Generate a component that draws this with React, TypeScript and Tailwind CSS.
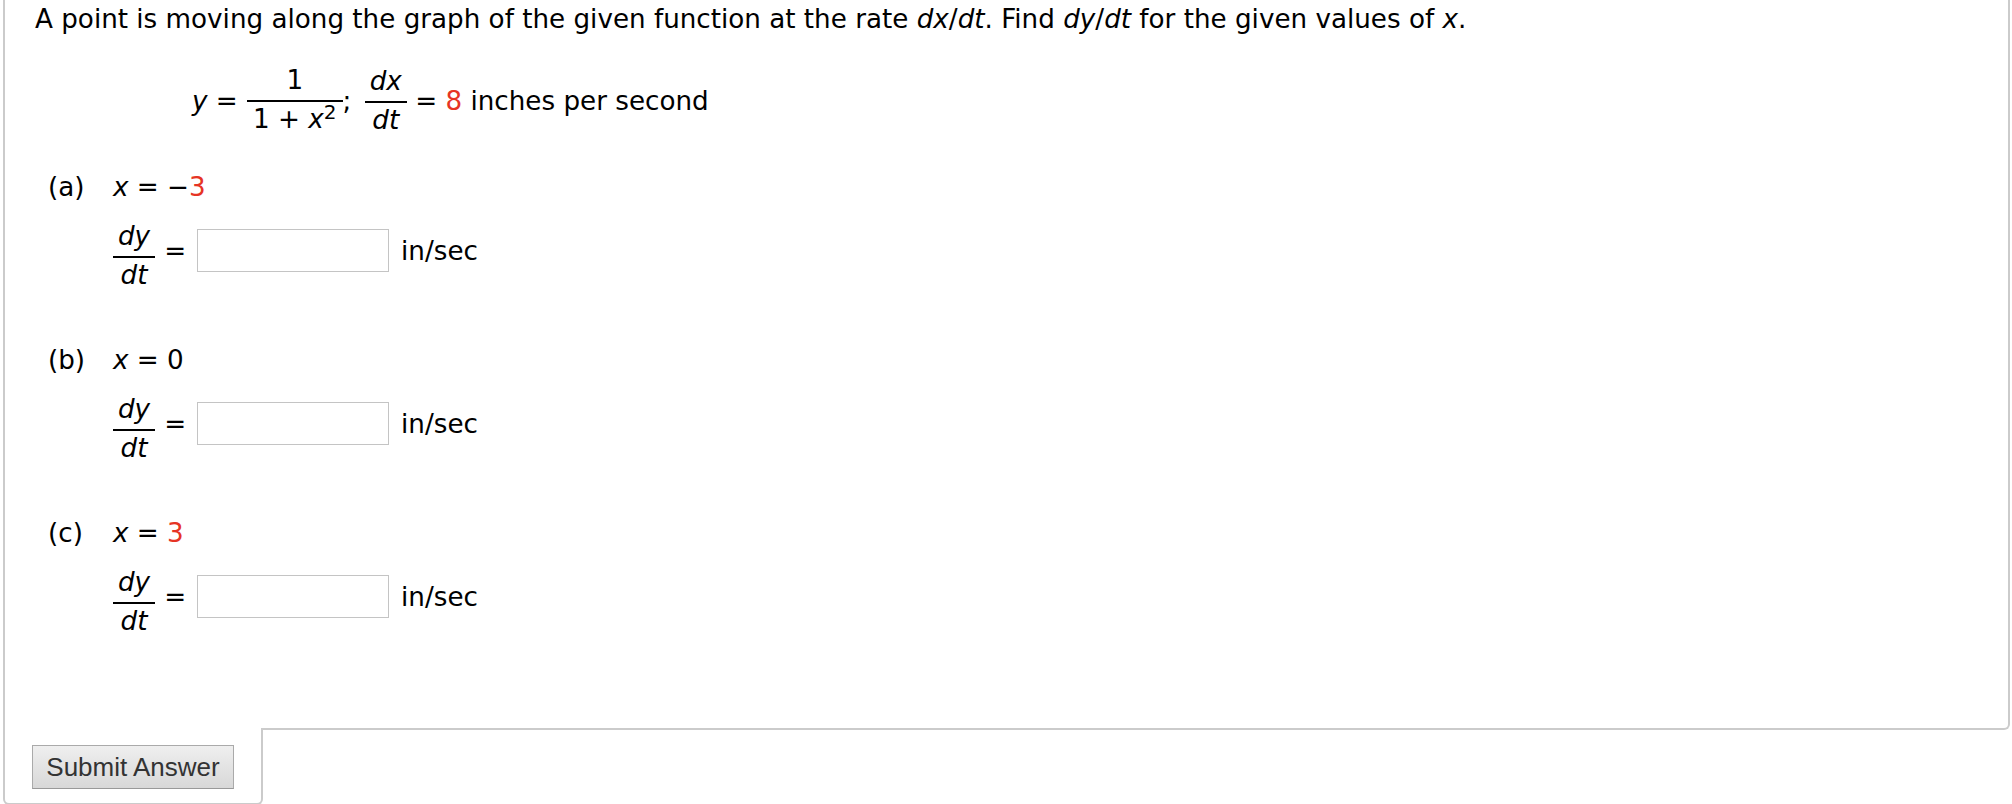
import React from "react";

const RED = "text-[#e63424]";

function Frac({ num, den, className = "" }: { num: React.ReactNode; den: React.ReactNode; className?: string }) {
  return (
    <span className={`inline-flex flex-col items-stretch ${className}`}>
      <span className="text-center leading-[28px] px-[5px] mb-[6px] whitespace-nowrap">{num}</span>
      <span className="h-[2px] bg-black" />
      <span className="text-center leading-[28px] px-[5px] mt-[3px] whitespace-nowrap">{den}</span>
    </span>
  );
}

function Part({ label, value, first }: { label: string; value: React.ReactNode; first?: boolean }) {
  return (
    <div className={first ? "mt-[36px]" : "mt-[55px]"}>
      <div className="flex leading-[32px] whitespace-pre">
        <span className="w-[78px] pl-[13px]">({label})</span>
        <span>
          <i>x</i> = {value}
        </span>
      </div>
      <div className="mt-[9px] flex items-center">
        <Frac className="ml-[78px] mt-[10px]" num={<i>dy</i>} den={<i>dt</i>} />
        <span className="ml-[9px] leading-[32px]">=</span>
        <span className="ml-[11px] block w-[192px] h-[43px] border border-[#c4c4c4] bg-white" />
        <span className="ml-[12px] leading-[32px]">in/sec</span>
      </div>
    </div>
  );
}

export default function App() {
  return (
    <div className="bg-white w-[2012px] h-[804px] overflow-hidden font-['DejaVu_Sans',Verdana,sans-serif] text-[26.2px] text-black">
      <div className="ml-[3px] w-[2007px]">
        <div className="border-x-2 border-b-2 border-[#cbcbcb] rounded-br-[6px] pl-[30px] pt-[3px] pb-[93px]">
          <div className="leading-[32px] whitespace-nowrap">
            A point is moving along the graph of the given function at the rate <i>dx</i>/<i>dt</i>. Find <i>dy</i>/<i>dt</i> for the given values of <i>x</i>.
          </div>
          <div className="mt-[31px] ml-[157px] flex items-center whitespace-pre">
            <span className="leading-[32px]"><i>y</i> = </span>
            <Frac
              className="ml-[1px]"
              num="1"
              den={
                <span className="px-[1px]">
                  1 + <i>x</i>
                  <span className="relative -top-[9px] text-[20px]">2</span>
                </span>
              }
            />
            <span className="leading-[32px]">; </span>
            <Frac className="ml-[5px]" num={<i>dx</i>} den={<i>dt</i>} />
            <span className="leading-[32px]"> = </span>
            <span className={`leading-[32px] ${RED}`}>8</span>
            <span className="leading-[32px]"> inches per second</span>
          </div>
          <Part first label="a" value={<>−<span className={RED}>3</span></>} />
          <Part label="b" value="0" />
          <Part label="c" value={<span className={RED}>3</span>} />
        </div>
        <div className="relative z-10 -mt-[2px] w-[260px] bg-white border-x-2 border-b-2 border-[#cbcbcb] rounded-b-[6px] pt-[17px] pb-[14px] pl-[27px]">
          <button className="block w-[202px] h-[44px] border border-[#aaaaaa] border-b-[#999999] bg-linear-to-b from-[#efefef] to-[#d8d8d8] font-['Liberation_Sans',Arial,sans-serif] text-[26px] text-[#333333] leading-none">
            Submit Answer
          </button>
        </div>
      </div>
    </div>
  );
}
